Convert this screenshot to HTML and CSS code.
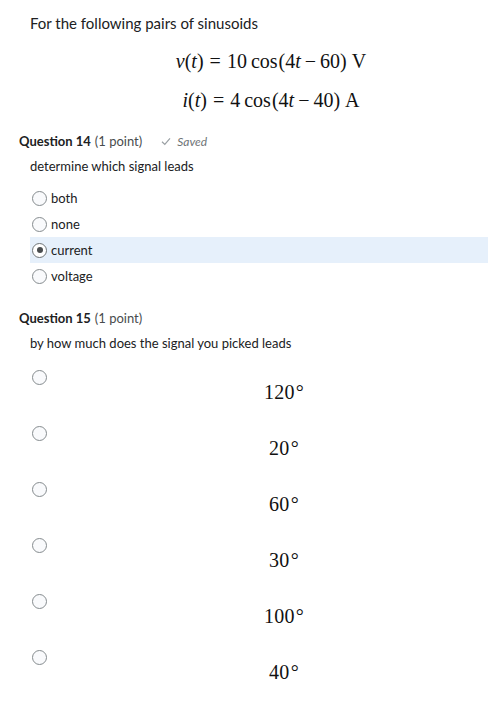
FILE: index.html
```html
<!DOCTYPE html>
<html>
<head>
<meta charset="utf-8">
<link rel="stylesheet" href="styles.css">
</head>
<body>
<div class="page">
  <p class="intro">For the following pairs of sinusoids</p>
  <div class="math-block">
    <div class="eq"><span class="mi">v</span>(<span class="mi">t</span>)<span class="rel">=</span>10<span class="op">cos</span>(4<span class="mi">t</span><span class="bin">−</span>60)<span class="unit">V</span></div>
    <div class="eq"><span class="mi">i</span>(<span class="mi">t</span>)<span class="rel">=</span>4<span class="op">cos</span>(4<span class="mi">t</span><span class="bin">−</span>40)<span class="unit">A</span></div>
  </div>

  <section class="question q14">
    <div class="q-head">
      <span class="q-title">Question 14</span> <span class="q-pts">(1 point)</span>
      <span class="saved">
        <svg class="check" width="10" height="9" viewBox="0 0 10 9"><path d="M1 4.8 L3.8 7.4 L9 1.4" fill="none" stroke="#9aa0a4" stroke-width="1.2"/></svg>
        <span class="saved-text">Saved</span>
      </span>
    </div>
    <p class="q-text">determine which signal leads</p>
    <div class="options">
      <label class="opt"><span class="radio"></span><span class="opt-label">both</span></label>
      <label class="opt"><span class="radio"></span><span class="opt-label">none</span></label>
      <label class="opt selected"><span class="radio checked"></span><span class="opt-label">current</span></label>
      <label class="opt"><span class="radio"></span><span class="opt-label">voltage</span></label>
    </div>
  </section>

  <section class="question q15">
    <div class="q-head">
      <span class="q-title">Question 15</span> <span class="q-pts">(1 point)</span>
    </div>
    <p class="q-text">by how much does the signal you picked leads</p>
    <div class="math-options">
      <div class="mopt"><span class="radio"></span><span class="mval">120<span class="deg">°</span></span></div>
      <div class="mopt"><span class="radio"></span><span class="mval">20<span class="deg">°</span></span></div>
      <div class="mopt"><span class="radio"></span><span class="mval">60<span class="deg">°</span></span></div>
      <div class="mopt"><span class="radio"></span><span class="mval">30<span class="deg">°</span></span></div>
      <div class="mopt"><span class="radio"></span><span class="mval">100<span class="deg">°</span></span></div>
      <div class="mopt"><span class="radio"></span><span class="mval">40<span class="deg">°</span></span></div>
    </div>
  </section>
</div>
</body>
</html>
```

FILE: styles.css
```css
html, body {
  margin: 0;
  padding: 0;
  background: #ffffff;
}
body {
  font-family: Lato, "Open Sans", "Liberation Sans", sans-serif;
  color: #202122;
  font-size: 13px;
}
.page {
  width: 488px;
  overflow: hidden;
}
.intro {
  margin: 0;
  padding: 13px 0 0 30px;
  line-height: 20px;
  font-size: 15px;
}
.math-block {
  padding-top: 8px;
  display: flex;
  flex-direction: column;
  align-items: center;
  padding-left: 54px;
}
.eq {
  font-family: "Liberation Serif", "Times New Roman", serif;
  font-size: 20px;
  line-height: 40px;
  height: 40px;
  color: #111;
  white-space: nowrap;
}
.eq + .eq {
  margin-top: -1px;
}
.mi {
  font-style: italic;
}
.op {
  margin: 0 1px 0 4px;
}
.rel {
  margin: 0 6px;
}
.bin {
  margin: 0 4px;
}
.unit {
  margin-left: 5px;
}
.question {
  margin: 0;
}
.q14 {
  padding-top: 9px;
}
.q-head {
  display: flex;
  align-items: center;
  padding-left: 19px;
  height: 24px;
  font-size: 13px;
  color: #202122;
}
.q-title {
  font-weight: 700;
  margin-right: 4px;
}
.q-pts {
  color: #494c4e;
}
.saved {
  display: inline-flex;
  align-items: center;
  margin-left: 19px;
  gap: 6px;
  font-style: italic;
  font-size: 12px;
  color: #6e7376;
}
.q-text {
  margin: 0;
  padding-left: 30px;
  line-height: 26px;
  height: 26px;
  font-size: 13px;
  color: #202122;
}
.options {
  margin-top: 6px;
  display: flex;
  flex-direction: column;
}
.opt {
  display: flex;
  align-items: center;
  height: 26px;
  margin-left: 30px;
  padding-left: 2px;
  gap: 4px;
  font-size: 13px;
  color: #202122;
}
.opt.selected {
  background: #e6f0fb;
}
.radio {
  width: 13px;
  height: 13px;
  border: 1.2px solid #868c8f;
  border-radius: 50%;
  background: #f9fafc;
  flex: none;
  position: relative;
  box-sizing: content-box;
}
.radio.checked {
  background: #ffffff;
  border-color: #6e7376;
}
.radio.checked::after {
  content: "";
  position: absolute;
  left: 3.5px;
  top: 3.5px;
  width: 6px;
  height: 6px;
  border-radius: 50%;
  background: #494c4e;
}
.q15 {
  padding-top: 17px;
}
.math-options {
  margin-top: 14px;
  display: flex;
  flex-direction: column;
}
.mopt {
  display: flex;
  align-items: flex-start;
  height: 56px;
  padding-left: 32px;
}
.mval {
  flex: 1;
  text-align: center;
  padding-left: 176px;
  padding-top: 9px;
  font-family: "Liberation Serif", "Times New Roman", serif;
  font-size: 20px;
  line-height: 26px;
  color: #111;
  box-sizing: border-box;
  max-width: 298px;
  letter-spacing: 0.3px;
}
.deg {
  margin-left: 1px;
}
```
